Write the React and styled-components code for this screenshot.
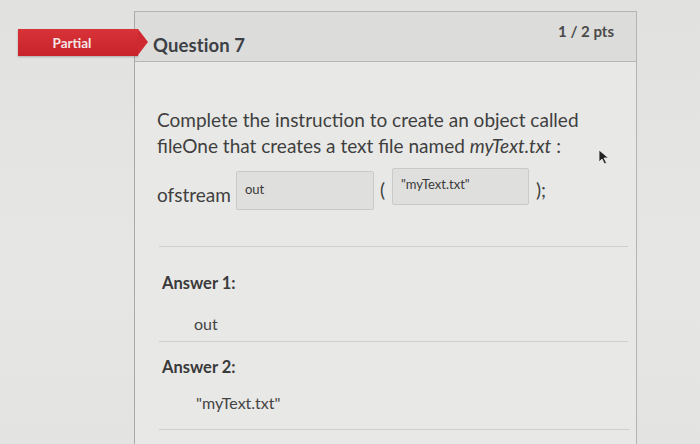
import styled, { createGlobalStyle } from "styled-components";

const GlobalStyle = createGlobalStyle`
  html, body {
    margin: 0;
    padding: 0;
    background: #e3e3e1;
  }
  body {
    font-family: Lato, "Noto Sans", sans-serif;
    color: #3b3b3b;
    width: 700px;
    height: 444px;
    overflow: hidden;
  }
`;

const Page = styled.div`
  position: relative;
  width: 700px;
  height: 444px;
  padding-top: 11px;
  box-sizing: border-box;
  overflow: hidden;
  background: linear-gradient(180deg, #e1e1df 0%, #e6e6e4 60%, #e3e3e1 100%);
`;

const Card = styled.div`
  position: relative;
  margin-left: 134px;
  width: 503px;
  height: 433px;
  border-left: 1px solid #a9a9a9;
  border-right: 1px solid #b4b4b4;
  border-top: 1px solid #b4b4b4;
  background: #e8e8e6;
  box-sizing: border-box;
`;

const Header = styled.div`
  height: 50px;
  display: flex;
  justify-content: space-between;
  padding: 0 22px 0 18px;
  background: #dcdcda;
  border-bottom: 1px solid #b8b8b6;
  box-sizing: border-box;
`;

const QuestionName = styled.div`
  align-self: flex-end;
  padding-bottom: 5px;
  font-size: 18.5px;
  font-weight: 700;
  color: #3d3f46;
  letter-spacing: 0.1px;
`;

const Points = styled.div`
  align-self: flex-start;
  padding-top: 10px;
  font-size: 15px;
  font-weight: 700;
  color: #4a4a4a;
`;

const Tag = styled.div`
  position: absolute;
  left: -117px;
  top: 17px;
  width: 120px;
  height: 27px;
  background: linear-gradient(180deg, #d9333a 0%, #c8232a 100%);
  color: #f4e6e6;
  font-size: 13.5px;
  font-weight: 700;
  display: flex;
  align-items: center;
  justify-content: center;
  padding-right: 12px;
  box-sizing: border-box;
  box-shadow: 0 1px 2px rgba(0, 0, 0, 0.25);

  &::after {
    content: "";
    position: absolute;
    right: -10px;
    top: 0;
    border-top: 13.5px solid transparent;
    border-bottom: 13.5px solid transparent;
    border-left: 10px solid #cf2a31;
  }
`;

const Body = styled.div`
  padding: 45px 6px 0 22px;
`;

const Prompt = styled.p`
  margin: 0;
  font-size: 19px;
  line-height: 26px;
  color: #3f3f3f;

  em {
    font-style: italic;
  }
`;

const BlankRow = styled.div`
  display: flex;
  align-items: center;
  margin-top: 9px;
  font-size: 19px;
  color: #3f3f3f;
`;

const Word = styled.span`
  margin-left: ${(p) => p.$ml || 0}px;
  margin-right: ${(p) => p.$mr || 0}px;
  padding-top: ${(p) => p.$pt || 0}px;
`;

const Blank = styled.div`
  width: ${(p) => p.$w}px;
  height: ${(p) => p.$h}px;
  margin-top: ${(p) => p.$mt || 0}px;
  background: #dfdfdd;
  border: 1px solid #cacac8;
  border-radius: 2px;
  box-sizing: border-box;
  display: flex;
  align-items: center;
  padding: 0 8px 4px;
  font-size: 13px;
  color: #3a3a3a;
`;

const Divider = styled.div`
  height: 1px;
  background: #cfcfcd;
  margin: ${(p) => p.$m};
`;

const AnswerLabel = styled.div`
  font-size: 16.5px;
  font-weight: 700;
  line-height: 20px;
  color: #3a3a3a;
  padding-left: 5px;
  margin-top: ${(p) => p.$mt}px;
`;

const AnswerValue = styled.div`
  font-size: 16px;
  line-height: 20px;
  color: #444;
  padding-left: ${(p) => p.$pl}px;
  margin-top: ${(p) => p.$mt}px;
`;

const Cursor = styled.svg`
  position: absolute;
  left: 598px;
  top: 149px;
`;

export default function App() {
  return (
    <>
      <GlobalStyle />
      <Page>
        <Card>
          <Tag>Partial</Tag>
          <Header>
            <QuestionName>Question 7</QuestionName>
            <Points>1 / 2 pts</Points>
          </Header>
          <Body>
            <Prompt>
              Complete the instruction to create an object called
              <br />
              fileOne that creates a text file named <em>myText.txt</em> :
            </Prompt>
            <BlankRow>
              <Word $mr={5} $pt={10}>ofstream</Word>
              <Blank $w={138} $h={39} $mt={3}>out</Blank>
              <Word $ml={6} $mr={7}>(</Word>
              <Blank $w={137} $h={37} $mt={-6}>"myText.txt"</Blank>
              <Word $ml={7}>);</Word>
            </BlankRow>
            <Divider $m="36px 2px 0 2px" />
            <AnswerLabel $mt={26}>Answer 1:</AnswerLabel>
            <AnswerValue $pl={37} $mt={21}>out</AnswerValue>
            <Divider $m="7px 2px 0 2px" />
            <AnswerLabel $mt={15}>Answer 2:</AnswerLabel>
            <AnswerValue $pl={39} $mt={16}>"myText.txt"</AnswerValue>
            <Divider $m="16px 0 0 2px" />
          </Body>
        </Card>
        <Cursor width="12" height="16" viewBox="0 0 12 16">
          <path d="M1 1 L1 13 L4 10 L6.5 15 L8.5 14 L6 9 L10.5 9 Z" fill="#222" stroke="#eee" strokeWidth="0.8" />
        </Cursor>
      </Page>
    </>
  );
}
